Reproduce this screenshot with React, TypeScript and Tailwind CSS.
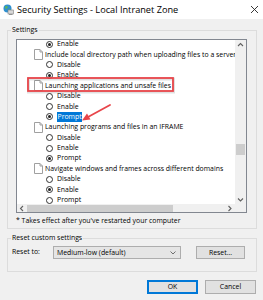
import React from 'react';

type Row =
  | { kind: 'doc'; label: string }
  | { kind: 'radio'; label: string; checked?: boolean; selected?: boolean };

const rows: Row[] = [
  { kind: 'radio', label: 'Enable', checked: true },
  { kind: 'doc', label: 'Include local directory path when uploading files to a server' },
  { kind: 'radio', label: 'Disable' },
  { kind: 'radio', label: 'Enable', checked: true },
  { kind: 'doc', label: 'Launching applications and unsafe files' },
  { kind: 'radio', label: 'Disable' },
  { kind: 'radio', label: 'Enable' },
  { kind: 'radio', label: 'Prompt', checked: true, selected: true },
  { kind: 'doc', label: 'Launching programs and files in an IFRAME' },
  { kind: 'radio', label: 'Disable' },
  { kind: 'radio', label: 'Enable' },
  { kind: 'radio', label: 'Prompt', checked: true },
  { kind: 'doc', label: 'Navigate windows and frames across different domains' },
  { kind: 'radio', label: 'Disable' },
  { kind: 'radio', label: 'Enable', checked: true },
  { kind: 'radio', label: 'Prompt' },
];

function DocIcon() {
  return (
    <svg width="9" height="11" viewBox="0 0 9 11" className="shrink-0">
      <path d="M0.5 0.5 H6 L8.5 3 V10.5 H0.5 Z" fill="#fff" stroke="#a0a0a0" />
      <path d="M6 0.5 V3 H8.5" fill="none" stroke="#a0a0a0" />
    </svg>
  );
}

function Radio({ checked }: { checked?: boolean }) {
  return (
    <span className="w-[7px] h-[7px] rounded-full border border-[#333] bg-white flex items-center justify-center shrink-0">
      {checked && <span className="w-[3px] h-[3px] rounded-full bg-[#222]" />}
    </span>
  );
}

function Chevron({ dir }: { dir: 'up' | 'down' | 'left' | 'right' }) {
  const d = {
    up: 'M1 4 L3.5 1.5 L6 4',
    down: 'M1 1.5 L3.5 4 L6 1.5',
    left: 'M4 1 L1.5 3.5 L4 6',
    right: 'M1.5 1 L4 3.5 L1.5 6',
  }[dir];
  const vertical = dir === 'up' || dir === 'down';
  return (
    <svg width={vertical ? 7 : 6} height={vertical ? 6 : 7} viewBox={vertical ? '0 0 7 6' : '0 0 6 7'}>
      <path d={d} fill="none" stroke="#606060" strokeWidth="1.1" />
    </svg>
  );
}

export default function App() {
  return (
    <div
      className="relative w-[263px] h-[300px] overflow-hidden bg-[#f0f0f0] text-black flex flex-col text-[6.9px] leading-[10px]"
      style={{ fontFamily: '"Open Sans", "Noto Sans", sans-serif' }}
    >
      {/* title bar */}
      <div className="h-[19px] bg-white flex items-center pl-[3px] pr-[4px] shrink-0">
        <svg width="11" height="11" viewBox="0 0 11 11" className="shrink-0">
          <circle cx="4.5" cy="4.5" r="4" fill="#2f8fcf" />
          <path d="M2 2.5 Q4 1.5 5 3 Q4 5 2.5 5 Z M5.5 5 Q7.5 4.5 8 6.5 Q6 7.5 5.5 5 Z" fill="#5cb85c" />
          <rect x="5" y="6" width="5.5" height="4" fill="#d8d8d8" stroke="#808080" strokeWidth="0.6" />
          <rect x="6" y="10" width="3.5" height="0.8" fill="#808080" />
        </svg>
        <span className="ml-[3px] text-[9.2px]">Security Settings - Local Intranet Zone</span>
        <svg width="9" height="9" viewBox="0 0 9 9" className="ml-auto">
          <path d="M1 1 L8 8 M8 1 L1 8" stroke="#222" strokeWidth="0.9" />
        </svg>
      </div>

      <div className="flex flex-col pl-[7px] pr-[6px]">
        {/* Settings group */}
        <fieldset className="mt-[6px] border border-[#dcdcdc] pl-[8px] pr-[9px] pt-[4px] pb-[2px]">
          <legend className="-ml-[5px] px-[1px]">Settings</legend>
          <div className="h-[174px] border border-[#828790] bg-white grid grid-cols-[1fr_11px] grid-rows-[1fr_8px]">
            <div className="overflow-hidden -mt-[1px]">
              {rows.map((r, i) =>
                r.kind === 'doc' ? (
                  <div key={i} className="h-[10.4px] flex items-center pl-[17px] gap-[2px] whitespace-nowrap">
                    <DocIcon />
                    <span>{r.label}</span>
                  </div>
                ) : (
                  <div key={i} className="h-[10.4px] flex items-center pl-[29px] gap-[4px] whitespace-nowrap">
                    <Radio checked={r.checked} />
                    <span className={r.selected ? 'bg-[#0078d7] text-white px-[0.5px]' : ''}>{r.label}</span>
                  </div>
                )
              )}
            </div>
            {/* vertical scrollbar */}
            <div className="bg-[#f0f0f0] flex flex-col items-center">
              <div className="h-[9px] flex items-center justify-center">
                <Chevron dir="up" />
              </div>
              <div className="h-[95px]" />
              <div className="w-[9px] h-[11px] bg-[#cdcdcd]" />
              <div className="flex-1" />
              <div className="h-[9px] flex items-center justify-center">
                <Chevron dir="down" />
              </div>
            </div>
            {/* horizontal scrollbar */}
            <div className="bg-[#f0f0f0] flex items-center">
              <div className="w-[10px] flex items-center justify-center">
                <Chevron dir="left" />
              </div>
              <div className="w-[146px] h-[7px] bg-[#cdcdcd]" />
              <div className="flex-1" />
              <div className="w-[10px] flex items-center justify-center">
                <Chevron dir="right" />
              </div>
            </div>
            <div className="bg-[#f0f0f0]" />
          </div>
          <div className="mt-[3px] h-[10px]">* Takes effect after you&apos;ve restarted your computer</div>
        </fieldset>

        {/* Reset group */}
        <fieldset className="mt-[4px] border border-[#dcdcdc] pl-[4px] pr-[11px] pt-[3px] pb-[12px]">
          <legend className="-ml-[1px] px-[1px]">Reset custom settings</legend>
          <div className="flex items-start">
            <span className="w-[41px] mt-[1px]">Reset to:</span>
            <div className="w-[128px] h-[13px] border border-[#adadad] bg-[#e5e5e5] flex items-center pl-[3px] pr-[4px]">
              <span>Medium-low (default)</span>
              <svg width="6" height="4" viewBox="0 0 6 4" className="ml-auto">
                <path d="M0.5 0.5 L3 3 L5.5 0.5" fill="none" stroke="#606060" strokeWidth="0.9" />
              </svg>
            </div>
            <div className="ml-[15px] w-[49px] h-[13px] border border-[#adadad] bg-[#e1e1e1] flex items-center justify-center">
              Reset...
            </div>
          </div>
        </fieldset>

        {/* dialog buttons */}
        <div className="mt-[8px] flex justify-end gap-[7px] mr-[1px]">
          <div className="w-[51px] h-[14px] border-2 border-[#0078d7] bg-[#e1e1e1] flex items-center justify-center">
            OK
          </div>
          <div className="w-[51px] h-[14px] border border-[#adadad] bg-[#e1e1e1] flex items-center justify-center">
            Cancel
          </div>
        </div>
      </div>

      {/* annotation overlay */}
      <svg width="263" height="300" viewBox="0 0 263 300" className="absolute inset-0 pointer-events-none">
        <rect x="28.5" y="79" width="145" height="13" fill="none" stroke="#000" strokeOpacity="0.12" strokeWidth="3" />
        <rect x="28" y="78" width="145" height="13" fill="none" stroke="#e8454a" strokeWidth="1.8" />
        <path d="M110 105 L88 117" stroke="#e8454a" strokeWidth="1.8" strokeLinecap="round" />
        <path d="M82 120.5 L87 113.5 L90.5 119.5 Z" fill="#e8454a" />
      </svg>
    </div>
  );
}
